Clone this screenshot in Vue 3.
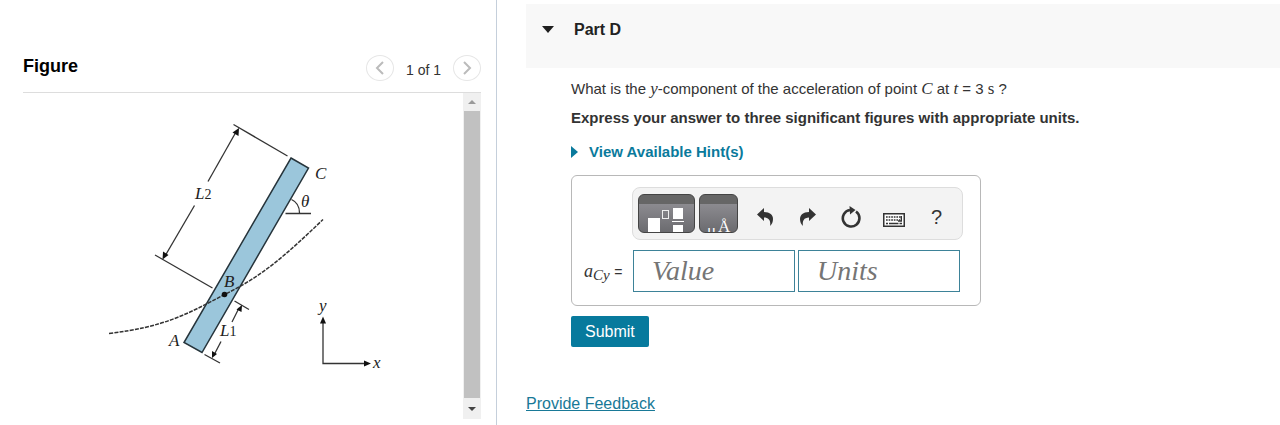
<script setup>
import { ref } from 'vue'

const open = ref(true)
const value = ref('')
const units = ref('')

function reset() {
  value.value = ''
  units.value = ''
}
</script>

<template>
  <div class="page">
    <aside class="figure-pane">
      <header class="figure-head">
        <h2 class="figure-title">Figure</h2>
        <nav class="pager" aria-label="Figures">
          <button class="round" type="button" aria-label="Previous figure">
            <svg width="10" height="14" viewBox="0 0 10 14"><path d="M8 1 L2 7 L8 13" /></svg>
          </button>
          <span class="count">1 of 1</span>
          <button class="round" type="button" aria-label="Next figure">
            <svg width="10" height="14" viewBox="0 0 10 14"><path d="M2 1 L8 7 L2 13" /></svg>
          </button>
        </nav>
      </header>

      <div class="figure-body">
        <svg class="diagram" viewBox="23 93 440 326" role="img" aria-label="Inclined bar ABC with a curved path through B">
          <g fill="none" stroke="#333" stroke-width="1.3">
            <polygon points="291,158 308.500,168 202,352.500 184,342.500" fill="#9bc6db" stroke="#26343b" stroke-width="1.5" />
            <path d="M109 333.500 C163 327 186 315 224.500 294.500 C263 276 288 253 323 219.500" stroke-width="1.5" stroke-dasharray="4 1.200" />
            <path d="M233.500 124.500 L287.500 156" />
            <path d="M155 255 L212.500 288" />
            <path d="M234.500 301 L249 309.500" />
            <path d="M204.500 354.500 L220 363" />
            <path d="M208 181.500 L236 132" />
            <path d="M194.500 205.500 L165 256" />
            <path d="M232 322 L239 308" />
            <path d="M221 341.500 L214 355" />
            <path d="M285.500 213.500 H311" stroke-width="1.5" />
            <path d="M291.500 199.500 C297 202 299.500 207 299.500 213" />
            <path d="M323 321 V363.500 H366" />
          </g>
          <g fill="#111">
            <path d="M239 128 L238.500 136 L232.500 132.500 Z" />
            <path d="M162.500 259.500 L163 251.500 L168.500 255 Z" />
            <path d="M242 305 L241.500 312 L236.500 309.500 Z" />
            <path d="M212 358 L212 351 L217 354 Z" />
            <path d="M323 316.500 L326 323.500 H320 Z" />
            <path d="M371 363.500 L364 360.500 V366.500 Z" />
            <circle cx="224.500" cy="294.500" r="2.800" />
          </g>
          <g class="labels">
            <text x="195" y="199">L<tspan class="sub">2</tspan></text>
            <text x="220" y="336">L<tspan class="sub">1</tspan></text>
            <text x="315" y="179">C</text>
            <text x="301" y="207">θ</text>
            <text x="224" y="287">B</text>
            <text x="169" y="346">A</text>
            <text x="319" y="311">y</text>
            <text x="373" y="368">x</text>
          </g>
        </svg>
        <div class="scrollbar">
          <button class="step" type="button" aria-label="Scroll up">
            <svg width="8" height="4" viewBox="0 0 8 4"><path d="M0 4 L4 0 L8 4 Z" fill="#9a9a9a" /></svg>
          </button>
          <div class="thumb"></div>
          <button class="step down" type="button" aria-label="Scroll down">
            <svg width="8" height="4" viewBox="0 0 8 4"><path d="M0 0 L4 4 L8 0 Z" fill="#444" /></svg>
          </button>
        </div>
      </div>
    </aside>

    <main class="part-pane">
      <button class="part-head" type="button" :aria-expanded="open" @click="open = !open">
        <svg width="12" height="7" viewBox="0 0 12 7"><path d="M0 0 H12 L6 7 Z" fill="#1f1f1f" /></svg>
        <span>Part D</span>
      </button>

      <form v-show="open" class="part-body" @submit.prevent>
        <p class="question">What is the <i class="math">y</i>-component of the acceleration of point <i class="math">C</i> at <i class="math">t</i> = 3 <span class="math">s</span> ?</p>
        <p class="instruction">Express your answer to three significant figures with appropriate units.</p>
        <button class="hints" type="button">
          <svg width="7" height="12" viewBox="0 0 7 12"><path d="M0 0 L7 6 L0 12 Z" fill="#0a7a9c" /></svg>
          <span>View Available Hint(s)</span>
        </button>

        <div class="answer">
          <div class="toolbar" role="toolbar" aria-label="Math tools">
            <button class="palette wide" type="button" aria-label="Templates">
              <svg width="57" height="38" viewBox="0 0 57 38">
                <rect x="10" y="23" width="12" height="15" fill="#fff" />
                <rect x="24.500" y="15.500" width="6" height="8" fill="none" stroke="#eee" />
                <rect x="35" y="13" width="10" height="11" fill="#fff" />
                <rect x="34" y="26" width="12" height="1" fill="#fff" />
                <rect x="35" y="30" width="10" height="8" fill="#fff" />
              </svg>
            </button>
            <button class="palette" type="button" aria-label="Symbols">
              <svg width="39" height="38" viewBox="0 0 39 38"><text x="8" y="41" class="sym">μ</text><text x="19" y="37" class="sym">Å</text></svg>
            </button>
            <button class="tool" type="button" aria-label="Undo">
              <svg width="16" height="18" viewBox="0 0 16 18"><path d="M0 6.500 L7 0 V4 C13 4 16 7 16 11 C16 14 15 16 13 18 C14 13 12 9.500 7 9.500 V13 Z" /></svg>
            </button>
            <button class="tool" type="button" aria-label="Redo">
              <svg width="16" height="18" viewBox="0 0 16 18"><path d="M16 6.500 L9 0 V4 C3 4 0 7 0 11 C0 14 1 16 3 18 C2 13 4 9.500 9 9.500 V13 Z" /></svg>
            </button>
            <button class="tool" type="button" aria-label="Reset" @click="reset">
              <svg width="20" height="22" viewBox="0 0 20 22"><path d="M15 5.500 A8.300 8.300 0 1 1 9 4" fill="none" stroke="#333" stroke-width="2.600" /><path d="M8.500 0 L14.500 4 L9 8.500 Z" /></svg>
            </button>
            <button class="tool key" type="button" aria-label="Keyboard shortcuts">
              <svg width="22" height="14" viewBox="0 0 22 14">
                <rect x="0.750" y="0.750" width="20.500" height="12.500" fill="#fff" stroke="#333" stroke-width="1.500" />
                <path d="M3 4 H19 M3 7 H17" fill="none" stroke="#333" stroke-width="1.600" stroke-dasharray="1.700 0.900" />
                <path d="M3 10.500 H5 M6 10.500 H15.500 M16.500 10.500 H19 M18.300 3 V8 H15" fill="none" stroke="#333" stroke-width="1.400" />
              </svg>
            </button>
            <button class="tool help" type="button" aria-label="Help">?</button>
          </div>

          <label class="variable" for="answer-value"><i>a</i><i class="index">Cy</i> <span class="equals">=</span></label>
          <div class="fields">
            <input id="answer-value" v-model="value" type="text" placeholder="Value" />
            <input v-model="units" type="text" placeholder="Units" aria-label="Units" />
          </div>
        </div>

        <button class="submit" type="submit">Submit</button>
      </form>

      <a class="feedback" href="#">Provide Feedback</a>
    </main>
  </div>
</template>

<style>
body {
  margin: 0;
  background: #fff;
}
</style>

<style scoped>
.page {
  display: grid;
  grid-template-columns: minmax(0, 497fr) minmax(0, 783fr);
  min-height: 100vh;
  font-family: "Liberation Sans", Arial, sans-serif;
  color: #333;
}
.page * {
  box-sizing: border-box;
}
button {
  font: inherit;
  color: inherit;
  border: 0;
  padding: 0;
  background: none;
  cursor: pointer;
}
svg {
  display: block;
  flex: none;
}
.figure-pane {
  border-right: 1px solid #c5cfdb;
  padding: 48px 15px 0 23px;
}
.figure-head {
  display: flex;
  justify-content: space-between;
  height: 45px;
  border-bottom: 1px solid #ddd;
}
.figure-title {
  margin: 6px 0 0;
  font-size: 18px;
  line-height: 24px;
  color: #000;
}
.pager {
  display: flex;
  align-items: center;
  gap: 12px;
  height: 40px;
}
.round {
  display: flex;
  align-items: center;
  justify-content: center;
  width: 28px;
  height: 26px;
  border: 1px solid #e6e6e6;
  border-radius: 50%;
}
.round path {
  fill: none;
  stroke: #bbb;
  stroke-width: 2;
}
.count {
  font-size: 14px;
  line-height: 20px;
  padding-top: 4px;
}
.figure-body {
  display: flex;
}
.diagram {
  flex: 1;
  min-width: 0;
}
.labels {
  font: italic 17px "Liberation Serif", "Times New Roman", serif;
  fill: #222;
}
.sub {
  font-style: normal;
  font-size: 14px;
}
.scrollbar {
  display: flex;
  flex-direction: column;
  width: 18px;
  background: #f0f0f0;
}
.step {
  display: flex;
  align-items: center;
  justify-content: center;
  height: 18px;
}
.step.down {
  height: 21px;
}
.thumb {
  flex: 1;
  margin: 0 1px;
  background: #c1c1c1;
}
.part-pane {
  padding: 4px 0 0 29px;
}
.part-head {
  display: flex;
  align-items: flex-start;
  gap: 20px;
  width: 100%;
  height: 64px;
  padding: 16px;
  background: #f8f8f8;
  font-size: 16px;
  font-weight: bold;
  line-height: 20px;
  color: #222;
}
.part-head svg {
  margin-top: 6px;
}
.part-body {
  padding: 11px 16px 0 45px;
}
.question,
.instruction {
  margin: 0 0 9px;
  font-size: 15px;
  line-height: 20px;
}
.instruction {
  font-weight: bold;
}
.math {
  font-family: "Liberation Serif", "Times New Roman", serif;
  font-size: 17px;
  line-height: 16px;
}
.hints {
  display: flex;
  align-items: center;
  gap: 11px;
  margin-top: 14px;
  font-size: 15px;
  font-weight: bold;
  line-height: 20px;
  color: #0a7a9c;
}
.answer {
  display: grid;
  grid-template-columns: 48px minmax(0, 1fr);
  row-gap: 10px;
  max-width: 410px;
  margin-top: 13px;
  padding: 11px 17px 13px 12px;
  border: 1px solid #b8b8b8;
  border-radius: 6px;
}
.toolbar {
  grid-column: 2;
  display: flex;
  align-items: center;
  height: 53px;
  padding: 0 4px 0 5px;
  background: #f3f3f3;
  border: 1px solid #ddd;
  border-radius: 8px;
}
.palette {
  width: 39px;
  height: 39px;
  margin-right: 5px;
  overflow: hidden;
  border: 1px solid #444;
  border-radius: 6px;
  background: linear-gradient(#666 0, #666 9px, #8c8b90 9px, #6b6b6f 100%);
}
.palette.wide {
  width: 57px;
  margin-right: 4px;
}
.palette svg {
  margin: -1px;
}
.sym {
  font: 17px "Liberation Serif", serif;
  fill: #fff;
}
.tool {
  display: flex;
  flex: 1;
  align-items: center;
  justify-content: center;
  height: 39px;
  padding-top: 7px;
  fill: #333;
}
.key {
  padding-top: 13px;
}
.help {
  font-size: 20px;
}
.variable {
  align-self: center;
  font-family: "Liberation Serif", "Times New Roman", serif;
  font-size: 18px;
  line-height: 20px;
  white-space: nowrap;
}
.index {
  position: relative;
  top: 3px;
  font-size: 15px;
}
.equals {
  font-family: "Liberation Sans", Arial, sans-serif;
  font-size: 14px;
}
.fields {
  display: flex;
  gap: 3px;
  padding: 0 3px 0 1px;
}
input {
  flex: 1;
  min-width: 0;
  height: 42px;
  padding: 0 18px;
  border: 1px solid #3d8298;
  border-radius: 0;
  background: #fff;
  font: italic 28px "Liberation Serif", "Times New Roman", serif;
  color: #333;
}
input::placeholder {
  color: #757575;
  opacity: 1;
}
.submit {
  margin-top: 10px;
  padding: 0 14px;
  height: 31px;
  border-radius: 2px;
  background: #077a9d;
  color: #fff;
  font-size: 16px;
}
.feedback {
  display: inline-block;
  margin-top: 47px;
  font-size: 16px;
  line-height: 20px;
  color: #187997;
}
</style>
